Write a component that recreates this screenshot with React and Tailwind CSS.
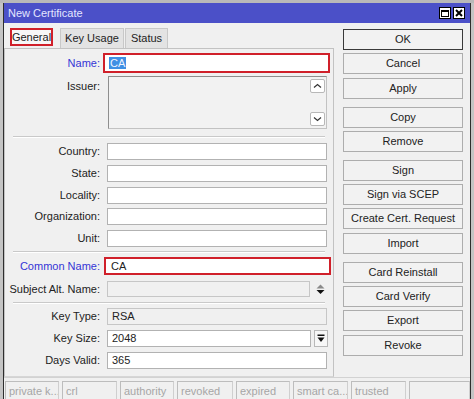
import React from 'react';

const buttonGroups = [
    ['OK', 'Cancel', 'Apply'],
    ['Copy', 'Remove'],
    ['Sign', 'Sign via SCEP', 'Create Cert. Request', 'Import'],
    ['Card Reinstall', 'Card Verify', 'Export', 'Revoke'],
];

const statusFields = [
    ['private k...', 'w-[54px]'],
    ['crl', 'w-[55px]'],
    ['authority', 'w-[54px]'],
    ['revoked', 'w-[56px]'],
    ['expired', 'w-[54px]'],
    ['smart ca...', 'w-[55px]'],
    ['trusted', 'w-[55px]'],
    ['', 'w-[61px]'],
];

function Label({ children, blue }) {
    return (
        <div className={`w-[96px] shrink-0 text-right pr-[1px] ${blue ? 'text-[#3535d6]' : 'text-[#222]'}`}>
            {children}
        </div>
    );
}

function Field({ label, value = '', disabled }) {
    return (
        <div className="flex items-center h-[17px]">
            <Label>{label}</Label>
            <div
                className={`ml-[6px] w-[220px] h-[17px] border flex items-center px-[4px] ${disabled ? 'bg-[#f0f0f0] border-[#c6c6c6]' : 'bg-white border-[#b2b2b2]'}`}
            >
                {value}
            </div>
        </div>
    );
}

function Separator() {
    return <div className="mx-[8px] h-[2px] border-t border-[#c9c9c9] border-b border-b-white" />;
}

function SmallBtn({ down }) {
    return (
        <div className="w-[15px] h-[14px] bg-white border border-[#b8b8b8] rounded-[2px] flex items-center justify-center">
            <svg width="9" height="6" viewBox="0 0 9 6">
                <path d={down ? 'M1 1.5 L4.5 4.5 L8 1.5' : 'M1 4.5 L4.5 1.5 L8 4.5'} fill="none" stroke="#333" strokeWidth="1.2" />
            </svg>
        </div>
    );
}

export default function App() {
    return (
        <div className="w-[474px] h-[399px] overflow-hidden bg-[#c4c4c4] font-['Liberation_Sans',Arial,sans-serif] text-[11px] text-[#222] leading-none">
            <div className="h-[3px] bg-[#b9b9b9]" />
            {/* Window */}
            <div className="ml-[3px] w-[468px] h-[396px] border-x border-[#2e2e2e] bg-[#f0f0f0] flex flex-col">
                {/* Title bar */}
                <div className="h-[20px] shrink-0 bg-[#4b50c8] flex items-center pl-[4px] pr-[5px]">
                    <span className="text-[#e4e6ff]">New Certificate</span>
                    <div className="ml-auto flex gap-[2px]">
                        <div className="w-[12px] h-[12px] bg-white border border-black flex items-center justify-center">
                            <div className="w-[8px] h-[7px] border border-black border-t-2" />
                        </div>
                        <div className="w-[12px] h-[12px] bg-white border border-black flex items-center justify-center">
                            <svg width="8" height="8" viewBox="0 0 8 8">
                                <path d="M1 1 L7 7 M7 1 L1 7" stroke="#000" strokeWidth="2" />
                            </svg>
                        </div>
                    </div>
                </div>

                {/* Body */}
                <div className="flex h-[354px] shrink-0">
                    {/* Left panel */}
                    <div className="w-[330px] flex flex-col">
                        {/* Tabs */}
                        <div className="h-[25px] flex items-end pl-[8px]">
                            <div className="mb-[4px] w-[39px] h-[14px] flex items-center justify-center bg-[#f7f7f7] outline-2 outline-[#d0202a]">
                                General
                            </div>
                            <div className="ml-[9px] w-[64px] h-[20px] flex items-center justify-center bg-[#e3e3e3] border border-b-0 border-[#c8c8c8]">
                                Key Usage
                            </div>
                            <div className="ml-[1px] w-[43px] h-[20px] flex items-center justify-center bg-[#e3e3e3] border border-b-0 border-[#c8c8c8]">
                                Status
                            </div>
                        </div>

                        {/* Panel */}
                        <div className="flex-1 border border-[#c2c2c2] border-b-[#d6d6d6] flex flex-col">
                            {/* Name */}
                            <div className="mt-[5px] flex items-center h-[18px]">
                                <Label blue>Name:</Label>
                                <div className="ml-[3px] w-[225px] h-[18px] bg-white border border-[#b2b2b2] outline-2 -outline-offset-1 outline-[#d0202a] flex items-center px-[4px]">
                                    <span className="bg-[#3f8fe4] text-[#eef4ff] px-[1px] leading-[12px]">CA</span>
                                </div>
                            </div>

                            {/* Issuer */}
                            <div className="mt-[4px] flex h-[53px]">
                                <Label>
                                    <span className="inline-block pt-[5px]">Issuer:</span>
                                </Label>
                                <div className="ml-[7px] w-[219px] h-[53px] bg-[#f2f2f2] border border-[#c2c2c2] border-t-[#8e8e8e] border-l-[#8e8e8e] flex flex-col items-end justify-between py-[2px] pr-[1px]">
                                    <SmallBtn />
                                    <SmallBtn down />
                                </div>
                            </div>

                            <div className="mt-[7px]">
                                <Separator />
                            </div>

                            {/* Subject fields */}
                            <div className="mt-[5px] flex flex-col gap-[4.75px]">
                                <Field label="Country:" />
                                <Field label="State:" />
                                <Field label="Locality:" />
                                <Field label="Organization:" />
                                <Field label="Unit:" />
                            </div>

                            <div className="mt-[4px]">
                                <Separator />
                            </div>

                            {/* Common Name */}
                            <div className="mt-[5px] flex items-center h-[16px]">
                                <Label blue>Common Name:</Label>
                                <div className="ml-[4px] w-[225px] h-[16px] bg-white border border-[#b2b2b2] outline-2 -outline-offset-1 outline-[#d0202a] flex items-center px-[5px]">
                                    CA
                                </div>
                            </div>

                            {/* Subject Alt. Name */}
                            <div className="mt-[7px] flex items-center h-[16px]">
                                <Label>Subject Alt. Name:</Label>
                                <div className="ml-[6px] w-[203px] h-[16px] bg-[#f0f0f0] border border-[#c6c6c6]" />
                                <svg className="ml-[6px]" width="9" height="11" viewBox="0 0 9 11">
                                    <path d="M0.5 4.5 L4.5 0.5 L8.5 4.5 Z" fill="#8a8a8a" />
                                    <path d="M0.5 6 L4.5 10 L8.5 6 Z" fill="#111" />
                                </svg>
                            </div>

                            <div className="mt-[5px]">
                                <Separator />
                            </div>

                            <div className="mt-[4px]">
                                <Field label="Key Type:" value="RSA" disabled />
                            </div>

                            {/* Key Size */}
                            <div className="mt-[5px] flex items-center h-[17px]">
                                <Label>Key Size:</Label>
                                <div className="ml-[6px] w-[204px] h-[17px] bg-white border border-[#b2b2b2] flex items-center px-[4px]">
                                    2048
                                </div>
                                <div className="ml-[3px] w-[14px] h-[17px] bg-[#f7f7f7] border border-[#b8b8b8] flex items-center justify-center">
                                    <svg width="8" height="9" viewBox="0 0 8 9">
                                        <rect x="0.5" y="0.5" width="7" height="1.5" fill="#111" />
                                        <path d="M0.5 3.5 L7.5 3.5 L4 8 Z" fill="#111" />
                                    </svg>
                                </div>
                            </div>

                            <div className="mt-[5px]">
                                <Field label="Days Valid:" value="365" />
                            </div>
                        </div>
                    </div>

                    {/* Right buttons */}
                    <div className="ml-[9px] w-[120px] pt-[6px] flex flex-col gap-[8px]">
                        {buttonGroups.map((group, gi) => (
                            <div key={gi} className="flex flex-col gap-[3.3px]">
                                {group.map((b) => (
                                    <div
                                        key={b}
                                        className={`h-[21px] flex items-center justify-center bg-[#f2f2f2] border ${b === 'OK' ? 'border-[#3a3a3a]' : 'border-[#adadad]'}`}
                                    >
                                        {b}
                                    </div>
                                ))}
                            </div>
                        ))}
                    </div>
                </div>

                {/* Status bar */}
                <div className="flex-1 flex gap-[3px] pl-[1px] pt-[3px] border-t border-[#d2d2d2]">
                    {statusFields.map(([t, w], i) => (
                        <div
                            key={i}
                            className={`${w} h-[20px] shrink-0 overflow-hidden whitespace-nowrap border border-[#cfcfcf] border-t-[#bdbdbd] border-l-[#bdbdbd] text-[#a6a6a6] pl-[3px] pt-[4px]`}
                        >
                            {t}
                        </div>
                    ))}
                </div>
            </div>
        </div>
    );
}
